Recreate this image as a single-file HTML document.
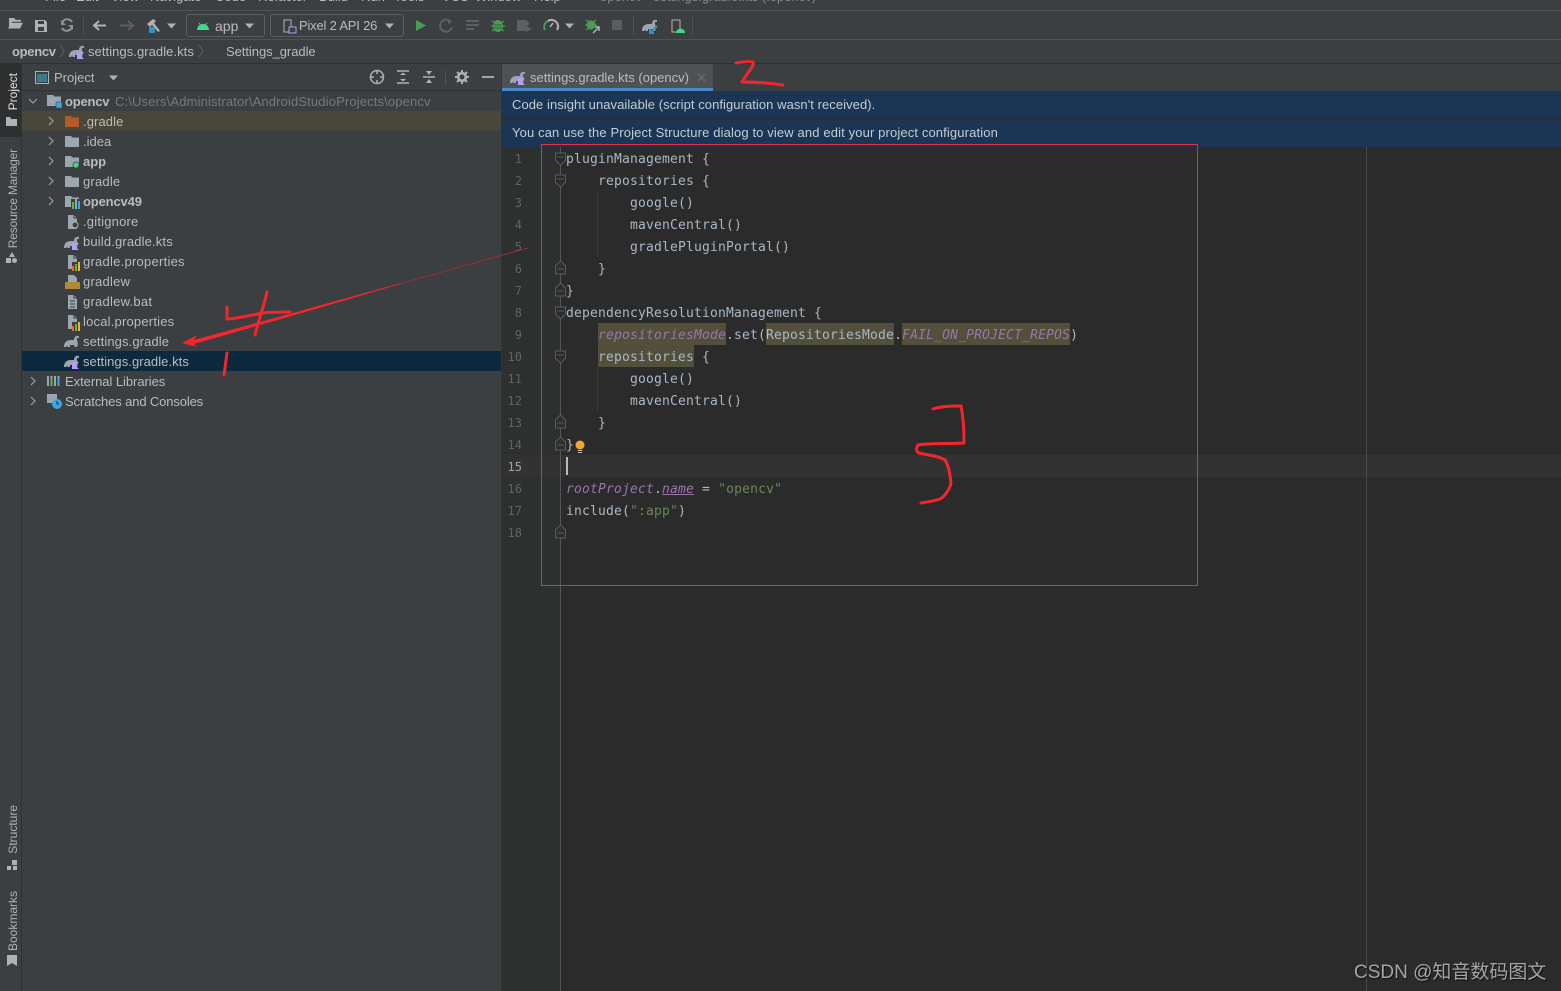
<!DOCTYPE html>
<html><head><meta charset="utf-8"><style>
html,body{margin:0;padding:0;width:1561px;height:991px;overflow:hidden;background:#3c3f41}
body{position:relative;font-family:"Liberation Sans","Noto Sans CJK SC",sans-serif;font-size:13px;color:#bbb}
.a{position:absolute}
.t{position:absolute;white-space:nowrap;line-height:20px;height:20px;margin-top:1px}
.b{font-weight:bold}
.v{position:absolute;writing-mode:vertical-rl;transform:rotate(180deg);white-space:nowrap;font-size:12px;line-height:14px;color:#afb1b3;left:6px}
.c{position:absolute;z-index:1;left:566px;white-space:pre;font-family:"DejaVu Sans Mono",monospace;font-size:13px;letter-spacing:.174px;line-height:22px;height:22px;color:#a9b7c6}
.n{position:absolute;width:20px;left:502px;text-align:right;font-family:"DejaVu Sans Mono",monospace;font-size:12px;line-height:22px;color:#606366}
.p{color:#9876aa;font-style:italic}.s{color:#6a8759}
.h{position:relative;display:inline-block;height:22px;line-height:22px}
.h::before{content:"";position:absolute;left:0;right:0;top:-2px;height:22px;background:#52503a;z-index:-1}
svg{position:absolute;left:0;top:0}
</style></head><body>
<div class="a" style="left:0;top:10px;width:1561px;height:1px;background:#515151"></div>
<div class="a" style="left:0;top:39px;width:1561px;height:1px;background:#515151"></div>
<div class="a" style="left:0;top:63px;width:1561px;height:1px;background:#2f3131"></div>
<!-- clipped menu -->
<div class="a" style="left:0;top:0;width:1561px;height:4px;overflow:hidden;font-size:13px;color:#bbb">
<span class="t" style="left:45px;top:-14px">File</span><span class="t" style="left:76px;top:-14px">Edit</span><span class="t" style="left:111px;top:-14px">View</span><span class="t" style="left:150px;top:-14px">Navigate</span><span class="t" style="left:215px;top:-14px">Code</span><span class="t" style="left:258px;top:-14px">Refactor</span><span class="t" style="left:319px;top:-14px">Build</span><span class="t" style="left:361px;top:-14px">Run</span><span class="t" style="left:394px;top:-14px">Tools</span><span class="t" style="left:442px;top:-14px">VCS</span><span class="t" style="left:475px;top:-14px">Window</span><span class="t" style="left:534px;top:-14px">Help</span><span class="t" style="left:600px;top:-14px;color:#888">opencv - settings.gradle.kts (:opencv)</span>
</div>
<!-- combos -->
<div class="a" style="left:186px;top:14px;width:77px;height:21px;border:1px solid #5e6060;border-radius:3px"></div>
<div class="a" style="left:270px;top:14px;width:132px;height:21px;border:1px solid #5e6060;border-radius:3px"></div>
<span class="t" style="left:215px;top:15px;font-size:14px">app</span>
<span class="t" style="left:299px;top:15px;letter-spacing:-.2px">Pixel 2 API 26</span>
<!-- breadcrumb -->
<span class="t b" style="left:12px;top:41px;color:#bbb;letter-spacing:-.3px">opencv</span>
<span class="t" style="left:88px;top:41px;letter-spacing:.06px">settings.gradle.kts</span>
<span class="t" style="left:226px;top:41px;letter-spacing:-.05px">Settings_gradle</span>
<!-- left strip -->
<div class="a" style="left:0;top:64px;width:21px;height:927px;background:#3c3f41"></div>
<div class="a" style="left:21px;top:64px;width:1px;height:927px;background:#323232"></div>
<div class="a" style="left:0;top:64px;width:21px;height:73px;background:#2d2f30"></div>
<div class="v" style="top:73px;color:#e0e0e0">Project</div>
<div class="v" style="top:149px;letter-spacing:-.18px">Resource Manager</div>
<div class="v" style="top:805px">Structure</div>
<div class="v" style="top:891px">Bookmarks</div>
<!-- project header -->
<span class="t" style="left:54px;top:67px">Project</span>
<div class="a" style="left:22px;top:90px;width:480px;height:1px;background:#323232"></div>
<!-- tree rows -->
<div class="a" style="left:22px;top:111px;width:479px;height:20px;background:#49473b"></div>
<div class="a" style="left:22px;top:351px;width:479px;height:20px;background:#0d293e"></div>
<span class="t b" style="left:65px;top:91px;letter-spacing:-.2px">opencv</span>
<span class="t" style="left:115px;top:91px;color:#787878;letter-spacing:.14px">C:\Users\Administrator\AndroidStudioProjects\opencv</span>
<span class="t" style="left:83px;top:111px;letter-spacing:.1px">.gradle</span>
<span class="t" style="left:83px;top:131px">.idea</span>
<span class="t b" style="left:83px;top:151px">app</span>
<span class="t" style="left:83px;top:171px;letter-spacing:.2px">gradle</span>
<span class="t b" style="left:83px;top:191px;letter-spacing:-.15px">opencv49</span>
<span class="t" style="left:83px;top:211px;letter-spacing:.2px">.gitignore</span>
<span class="t" style="left:83px;top:231px;letter-spacing:.15px">build.gradle.kts</span>
<span class="t" style="left:83px;top:251px;letter-spacing:.25px">gradle.properties</span>
<span class="t" style="left:83px;top:271px;letter-spacing:.25px">gradlew</span>
<span class="t" style="left:83px;top:291px;letter-spacing:.25px">gradlew.bat</span>
<span class="t" style="left:83px;top:311px;letter-spacing:.2px">local.properties</span>
<span class="t" style="left:83px;top:331px;letter-spacing:.1px">settings.gradle</span>
<span class="t" style="left:83px;top:351px;letter-spacing:.06px">settings.gradle.kts</span>
<span class="t" style="left:65px;top:371px;letter-spacing:-.05px">External Libraries</span>
<span class="t" style="left:65px;top:391px;letter-spacing:-.13px">Scratches and Consoles</span>
<!-- editor -->
<div class="a" style="left:501px;top:64px;width:1px;height:927px;background:#323232"></div>
<div class="a" style="left:502px;top:91px;width:1059px;height:900px;background:#2b2b2b"></div>
<div class="a" style="left:502px;top:64px;width:211px;height:24px;background:#4e5254"></div>
<div class="a" style="left:502px;top:88px;width:211px;height:3px;background:#4a88c7"></div>
<span class="t" style="left:530px;top:67px">settings.gradle.kts (opencv)</span>
<div class="a" style="left:502px;top:91px;width:1059px;height:27px;background:#1b3555"></div>
<div class="a" style="left:502px;top:119px;width:1059px;height:28px;background:#1b3555"></div>
<span class="t" style="left:512px;top:94px;color:#c4ccd4;letter-spacing:.06px">Code insight unavailable (script configuration wasn't received).</span>
<span class="t" style="left:512px;top:122px;color:#c4ccd4;letter-spacing:.13px">You can use the Project Structure dialog to view and edit your project configuration</span>
<div class="a" style="left:502px;top:147px;width:58px;height:844px;background:#2e2f2f"></div>
<div class="a" style="left:502px;top:455px;width:1059px;height:22px;background:#323232"></div>
<div class="a" style="left:560px;top:147px;width:1px;height:844px;background:#555"></div>
<div class="a" style="left:1366px;top:147px;width:1px;height:844px;background:#4a4a4a"></div>
<div class="a" style="left:566px;top:457px;width:2px;height:18px;background:#bbb"></div>
<div class="a" style="left:597px;top:191px;width:1px;height:66px;background:#3b3b3b"></div>
<div class="a" style="left:597px;top:367px;width:1px;height:44px;background:#3b3b3b"></div>
<div class="n" style="top:148px">1</div><div class="n" style="top:170px">2</div><div class="n" style="top:192px">3</div><div class="n" style="top:214px">4</div><div class="n" style="top:236px">5</div><div class="n" style="top:258px">6</div><div class="n" style="top:280px">7</div><div class="n" style="top:302px">8</div><div class="n" style="top:324px">9</div><div class="n" style="top:346px">10</div><div class="n" style="top:368px">11</div><div class="n" style="top:390px">12</div><div class="n" style="top:412px">13</div><div class="n" style="top:434px">14</div><div class="n" style="top:456px;color:#a4a3a3">15</div><div class="n" style="top:478px">16</div><div class="n" style="top:500px">17</div><div class="n" style="top:522px">18</div>
<div class="c" style="top:149px">pluginManagement {</div>
<div class="c" style="top:171px">    repositories {</div>
<div class="c" style="top:193px">        google()</div>
<div class="c" style="top:215px">        mavenCentral()</div>
<div class="c" style="top:237px">        gradlePluginPortal()</div>
<div class="c" style="top:259px">    }</div>
<div class="c" style="top:281px">}</div>
<div class="c" style="top:303px">dependencyResolutionManagement {</div>
<div class="c" style="top:325px">    <span class="p h">repositoriesMode</span>.set(<span class="h">RepositoriesMode</span>.<span class="p h">FAIL_ON_PROJECT_REPOS</span>)</div>
<div class="c" style="top:347px">    <span class="h">repositories</span> {</div>
<div class="c" style="top:369px">        google()</div>
<div class="c" style="top:391px">        mavenCentral()</div>
<div class="c" style="top:413px">    }</div>
<div class="c" style="top:435px">}</div>
<div class="c" style="top:479px"><span class="p">rootProject</span>.<span class="p" style="text-decoration:underline">name</span> = <span class="s">"opencv"</span></div>
<div class="c" style="top:501px">include(<span class="s">":app"</span>)</div>
<div class="a" style="left:1354px;top:960px;font-size:19px;line-height:26px;white-space:nowrap;color:#a5a5a5;text-shadow:1px 1px 1px #111;font-family:'Liberation Sans','Noto Sans CJK SC',sans-serif">CSDN @知音数码图文</div>

<svg width="1561" height="991" viewBox="0 0 1561 991" fill="none" style="z-index:2">
<defs>
<path id="fo" d="M0 0h6l1.500 1.500H14V11H0z" fill="#9aa7b0"/>
<path id="el" d="M0 13C0 8 3 6 7 6h3c0-3 2-5 5-4v2c-2-.5-2.500 1-2 2 1 2 1 5 0 7h-2.500v-2H6v2H3.500v-1.500L2 13z" fill="#9aa7b0"/>
<path id="chev" d="M0 0l4 4-4 4" stroke="#9da0a2" stroke-width="1.200"/>
<path id="chevd" d="M0 0l4 4 4-4" stroke="#9da0a2" stroke-width="1.200"/>
<path id="car" d="M0 0h9l-4.500 5z" fill="#afb1b3"/>
<g id="kt"><use href="#el"/><path d="M8 8h7l-3.500 3.500L15 15H8z" fill="#b99bf8"/></g>
<g id="doc"><path d="M3 0h6l3 3v11H3z" fill="#9aa7b0"/><path d="M9 0v3h3" stroke="#3c3f41"/></g>
<g id="prop"><use href="#doc"/><rect x="7" y="7" width="9" height="9" fill="#3c3f41"/><rect x="7" y="11" width="2" height="5" fill="#f26522"/><rect x="10" y="9" width="2" height="7" fill="#62b543"/><rect x="13" y="7" width="2" height="9" fill="#f4af3d"/></g>
<g id="fold"><path d="M-5-5h10v7l-5 5-5-5z" stroke="#5a5d5e" fill="#2b2b2b"/><path d="M-3-1h6" stroke="#5a5d5e"/></g>
<g id="foldu"><path d="M-5 6h10v-8l-5-5-5 5z" stroke="#5a5d5e" fill="#2e2f2f"/><path d="M-3 1h6" stroke="#5a5d5e"/></g>
</defs>
<!-- toolbar icons -->
<path d="M9 20h5l2 2h5v2H12l-3 7zM11 25h12l-3 6H8z" fill="#afb1b3" transform="translate(0,-1) scale(1 .95)"/>
<path d="M35 20h10l2 2v10H35z" fill="#afb1b3"/><rect x="38" y="21" width="6" height="3" fill="#3c3f41"/><rect x="38" y="27" width="6" height="4" fill="#3c3f41"/>
<path d="M72 22a5.500 5.500 0 0 0-10 1M62 28a5.500 5.500 0 0 0 10-1" stroke="#8f9294" stroke-width="2"/><path d="M61 20v5h5zM73 30v-5h-5z" fill="#8f9294"/>
<path d="M83.500 15v20" stroke="#515151"/>
<path d="M106 25.500H95M99 21l-5 4.500 5 4.500" stroke="#afb1b3" stroke-width="2"/>
<path d="M120 25.500h11M128 21l5 4.500-5 4.500" stroke="#5e6060" stroke-width="2"/>
<path d="M147 24l6-5 3 2-2 2 6 8-2 1-6-7-2 2z" fill="#afb1b3"/><rect x="149" y="27" width="6" height="6" fill="#3592c4"/>
<use href="#car" x="167" y="23.500"/>
<path d="M197 30a6 6 0 0 1 12 0z" fill="#3ddc84"/><path d="M199 23l1.500 2M207 23l-1.500 2" stroke="#3ddc84"/>
<use href="#car" x="245" y="23.500"/>
<rect x="284" y="20" width="7" height="12" stroke="#afb1b3" fill="none"/><rect x="289" y="27" width="7" height="6" stroke="#b99bf8" fill="#3c3f41"/>
<use href="#car" x="385" y="23.500"/>
<path d="M416 20l10 5.500-10 5.500z" fill="#499c54"/>
<path d="M451 22a6 6 0 1 0 1 5" stroke="#5e6060" stroke-width="2"/><path d="M447 20l4 2-2 3z" fill="#5e6060"/>
<path d="M466 21h13M466 25h13M466 29h8" stroke="#5e6060" stroke-width="2"/>
<ellipse cx="498" cy="26" rx="5" ry="6" fill="#499c54"/><path d="M492 21l3 2M504 21l-3 2M491 26h14M492 31l3-2M504 31l-3-2" stroke="#499c54" stroke-width="1.300"/><path d="M494 25h8M494 28h8" stroke="#3c3f41" stroke-width=".8"/>
<path d="M517 20h9l3 3v2l-3 1v5h-9z" fill="#5e6060"/><path d="M526 26l6 3-6 3z" fill="#5e6060"/>
<path d="M545 30a6.500 6.500 0 0 1 3-9" stroke="#499c54" stroke-width="2"/><path d="M548 21a6.500 6.500 0 0 1 9 9" stroke="#afb1b3" stroke-width="2"/><path d="M550 27l3-4" stroke="#afb1b3" stroke-width="1.500"/>
<use href="#car" x="565" y="23.500"/>
<circle cx="591" cy="25" r="4.500" fill="#499c54"/><path d="M586 20l3 2M596 20l-3 2M585 25h12M586 30l3-2" stroke="#499c54" stroke-width="1.300"/><path d="M593 33l6-6M595 27h4v4" stroke="#afb1b3" stroke-width="1.500"/>
<rect x="612" y="20" width="10" height="10" fill="#5a5d5f"/>
<path d="M633.500 15v20" stroke="#515151"/>
<use href="#el" x="642" y="18"/><path d="M657 26l-7 7M650 29v4h4" stroke="#3592c4" stroke-width="2"/>
<rect x="672" y="20" width="8" height="12" stroke="#afb1b3"/><path d="M676 33a4.500 4.500 0 0 1 9 0z" fill="#3ddc84"/>
<path d="M692.500 15v20" stroke="#515151"/>
<!-- breadcrumb -->
<path d="M60 45l4 6-4 6M199 45l4 6-4 6" stroke="#5e6060"/>
<use href="#kt" x="69" y="44"/>
<!-- strip icons -->
<path d="M6 117h4l1 2h6v7H6z" fill="#afb1b3"/>
<path d="M12 252l3 5H9z M6 258h5v5H6z" fill="#afb1b3"/><circle cx="14.500" cy="260.500" r="2.500" fill="#afb1b3"/>
<path d="M12 860h5v5h-5zM7 866h4v4H7zM13 866h4v4h-4z" fill="#afb1b3"/>
<path d="M7 955h10v11l-5-3-5 3z" fill="#afb1b3"/>
<!-- header icons -->
<rect x="35.500" y="71.500" width="13" height="12" stroke="#afb1b3"/><rect x="37" y="74" width="10" height="8" fill="#3d7a92"/>
<use href="#car" x="109" y="75.500"/>
<circle cx="377" cy="77" r="6.500" stroke="#afb1b3" stroke-width="1.500"/><path d="M377 70v4M377 80v4M370 77h4M380 77h4" stroke="#afb1b3" stroke-width="1.500"/>
<path d="M397 71h12M397 83h12" stroke="#afb1b3" stroke-width="1.500"/><path d="M400 75l3-2.500 3 2.500zM400 79l3 2.500 3-2.500z" fill="#afb1b3"/>
<path d="M423 77h12" stroke="#afb1b3" stroke-width="1.500"/><path d="M426 71l3 4 3-4zM426 83l3-4 3 4z" fill="#afb1b3"/>
<path d="M445.500 70v15" stroke="#515151"/>
<circle cx="462" cy="77" r="3.800" stroke="#afb1b3" stroke-width="2.600"/><path d="M462 70v3M462 81v3M455 77h3M466 77h3M457 72l2 2M467 82l-2-2M467 72l-2 2M457 82l2-2" stroke="#afb1b3" stroke-width="2"/>
<path d="M482 77h12" stroke="#afb1b3" stroke-width="1.800"/>
<!-- tab -->
<use href="#kt" x="510" y="70"/>
<path d="M698 74l7 7M705 74l-7 7" stroke="#6e7072"/>
<!-- tree chevrons -->
<use href="#chevd" x="29" y="99"/>
<use href="#chev" x="49" y="117"/><use href="#chev" x="49" y="137"/><use href="#chev" x="49" y="157"/><use href="#chev" x="49" y="177"/><use href="#chev" x="49" y="197"/>
<use href="#chev" x="31" y="377"/><use href="#chev" x="31" y="397"/>
<!-- tree icons -->
<use href="#fo" x="47" y="95"/><rect x="56" y="102" width="6" height="6" fill="#3ba7e0" stroke="#3c3f41" stroke-width=".5"/>
<path d="M65 116h6l1.500 1.500H79V127H65z" fill="#b5592c"/>
<use href="#fo" x="65" y="136"/>
<use href="#fo" x="65" y="156"/><circle cx="76" cy="165" r="3" fill="#3ddc84" stroke="#3c3f41" stroke-width=".8"/>
<use href="#fo" x="65" y="176"/>
<use href="#fo" x="65" y="196"/><rect x="71" y="199" width="9" height="10" fill="#3c3f41"/><rect x="72" y="202" width="2" height="7" fill="#62b543"/><rect x="75" y="199" width="2" height="10" fill="#9aa7b0"/><rect x="78" y="201" width="2" height="8" fill="#3ba7e0"/>
<use href="#doc" x="65" y="215"/><circle cx="75" cy="225" r="3" stroke="#afb1b3" fill="#3c3f41"/>
<use href="#kt" x="64" y="235"/>
<use href="#prop" x="65" y="255"/>
<path d="M68 275h6l3 3v4h-9z" fill="#9aa7b0"/><rect x="65" y="282" width="15" height="7" fill="#b08a32"/>
<use href="#doc" x="65" y="295"/><path d="M70 301h5M70 304h5M70 307h5" stroke="#3c3f41"/>
<use href="#prop" x="65" y="315"/>
<use href="#el" x="64" y="334"/>
<use href="#kt" x="64" y="354"/>
<path d="M48 376v10M51.500 376v10M55 376v10M58.500 376v10" stroke="#9aa7b0" stroke-width="2"/><path d="M51.500 379v7" stroke="#62b543" stroke-width="2"/><path d="M58.500 378v8" stroke="#3ba7e0" stroke-width="2"/>
<rect x="47" y="394" width="10" height="9" fill="#9aa7b0"/><circle cx="57" cy="404" r="5" fill="#3ba7e0"/><path d="M57 401v3h2" stroke="#2b2b2b"/>
<!-- fold markers -->
<use href="#fold" x="560.500" y="158"/><use href="#fold" x="560.500" y="180"/><use href="#fold" x="560.500" y="312"/><use href="#fold" x="560.500" y="356"/>
<use href="#foldu" x="560.500" y="268"/><use href="#foldu" x="560.500" y="290"/><use href="#foldu" x="560.500" y="422"/><use href="#foldu" x="560.500" y="444"/><use href="#foldu" x="560.500" y="532"/>
<!-- bulb -->
<circle cx="580" cy="445" r="4.500" fill="#f0a732"/><path d="M577.500 450.500h5M578 452.500h4" stroke="#bbb"/>
<!-- annotations -->
<rect x="541.500" y="144.500" width="656" height="441" stroke="#e8303a"/>
<g stroke="#f4262b" stroke-linecap="round" stroke-linejoin="round" stroke-width="3">
<path d="M736 63c6-1 14-2 17-1 1 2-1 5-3 8-3 4-6 9-8 12 12 0 28 1 41 3"/>
<path d="M267 292c-3 14-9 30-12 43"/>
<path d="M227 307v12c8 0 24-4 36-6 8-1 18-1 27-1"/>
<path d="M227 353l-3 22"/>
<path d="M933 409c8-3 20-3 28-3 2 10 3 25 3 37-14 1-35 0-46 2-2 3-2 7 1 8 8 2 20 3 26 7 4 6 5 15 6 23-1 6-6 13-11 16-6 2-12 3-19 4"/>
</g>
<path d="M182 343l15-8-3 5 106-29c50-14 90-25 120-33-30 9-70 21-118 35l-108 31 3 3z" fill="#f4262b"/>
<path d="M410 281L528 248" stroke="#b02a30" stroke-width=".8"/>
</svg>
</body></html>
